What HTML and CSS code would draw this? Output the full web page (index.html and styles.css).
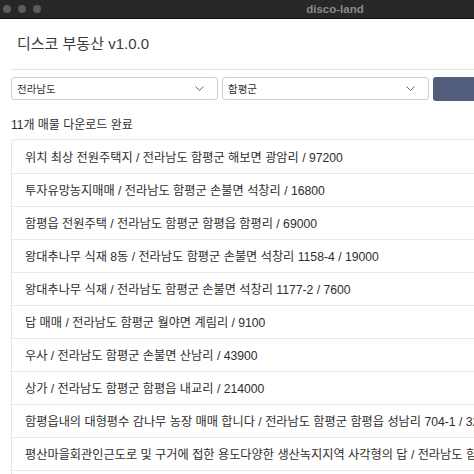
FILE: index.html
```html
<!DOCTYPE html>
<html lang="ko">
<head>
<meta charset="utf-8">
<title>disco-land</title>
<link rel="stylesheet" href="styles.css">
</head>
<body>
<div class="window">
  <div class="titlebar">
    <div class="lights">
      <span class="light"></span><span class="light"></span><span class="light"></span>
    </div>
    <div class="wtitle">disco-land</div>
  </div>
  <div class="content">
    <h1 class="heading">디스코 부동산 v1.0.0</h1>
    <hr class="rule">
    <div class="controls">
      <div class="select"><span>전라남도</span><svg class="chev" viewBox="0 0 9 5" width="9" height="5"><path d="M0.5 0.5l4 4 4-4" fill="none" stroke="#666" stroke-width="1"/></svg></div>
      <div class="select"><span>함평군</span><svg class="chev" viewBox="0 0 9 5" width="9" height="5"><path d="M0.5 0.5l4 4 4-4" fill="none" stroke="#666" stroke-width="1"/></svg></div>
      <button class="btn"></button>
    </div>
    <p class="status">11개 매물 다운로드 완료</p>
    <ul class="list">
      <li>위치 최상 전원주택지 / 전라남도 함평군 해보면 광암리 / 97200</li>
      <li>투자유망농지매매 / 전라남도 함평군 손불면 석창리 / 16800</li>
      <li>함평읍 전원주택 / 전라남도 함평군 함평읍 함평리 / 69000</li>
      <li>왕대추나무 식재 8동 / 전라남도 함평군 손불면 석창리 1158-4 / 19000</li>
      <li>왕대추나무 식재 / 전라남도 함평군 손불면 석창리 1177-2 / 7600</li>
      <li>답 매매 / 전라남도 함평군 월야면 계림리 / 9100</li>
      <li>우사 / 전라남도 함평군 손불면 산남리 / 43900</li>
      <li>상가 / 전라남도 함평군 함평읍 내교리 / 214000</li>
      <li>함평읍내의 대형평수 감나무 농장 매매 합니다 / 전라남도 함평군 함평읍 성남리 704-1 / 32000</li>
      <li>평산마을회관인근도로 및 구거에 접한 용도다양한 생산녹지지역 사각형의 답 / 전라남도 함평군 함평읍 기각리 / 8000</li>
      <li>전원주택 부지 / 전라남도 함평군 대동면 / 5000</li>
    </ul>
  </div>
</div>
</body>
</html>
```

FILE: styles.css
```css
html, body {
  margin: 0;
  padding: 0;
  overflow: hidden;
  background: #ffffff;
}
body {
  font-family: "Liberation Sans", "Noto Sans CJK KR", sans-serif;
  color: #2e2e2e;
}
.window {
  width: 664px;
}
.titlebar {
  height: 18px;
  background: #272727;
  border-bottom: 1px solid #111;
  display: flex;
  align-items: center;
}
.lights {
  display: flex;
  gap: 7px;
  padding-left: 3px;
}
.light {
  width: 8px;
  height: 8px;
  border-radius: 50%;
  background: #5c5c5c;
}
.wtitle {
  flex: 1;
  text-align: center;
  color: #8a8a8a;
  font-weight: bold;
  font-size: 11.5px;
  margin-right: 35px;
}
.content {
  padding: 0 11px;
}
.heading {
  margin: 0;
  padding: 14px 0 0 6px;
  font-size: 15px;
  font-weight: normal;
  color: #3a3a3a;
  line-height: 22px;
}
.rule {
  margin: 14px 0 0;
  border: 0;
  border-top: 1px solid #e4e4e4;
}
.controls {
  display: flex;
  gap: 4px;
  margin-top: 7px;
}
.select {
  width: 207px;
  height: 23px;
  box-sizing: border-box;
  border: 1px solid #cfcfcf;
  border-radius: 3px;
  display: flex;
  align-items: center;
  justify-content: space-between;
  padding: 0 13px 0 5px;
  font-size: 10.5px;
  color: #333;
}
.chev {
  display: block;
}
.btn {
  width: 110px;
  height: 24px;
  border: 0;
  border-radius: 3px;
  background: #535e7c;
}
.status {
  margin: 15px 0 0;
  font-size: 12px;
  line-height: 18px;
  color: #2e2e2e;
}
.list {
  list-style: none;
  margin: 5px 0 0;
  padding: 0;
  border: 1px solid #e6e6e6;
  border-radius: 3px;
}
.list li {
  height: 33px;
  box-sizing: border-box;
  border-top: 1px solid #e8e8e8;
  padding: 0 13px;
  display: flex;
  align-items: center;
  font-size: 12.2px;
  white-space: nowrap;
  color: #2e2e2e;
}
.list li:first-child {
  border-top: 0;
}
```
